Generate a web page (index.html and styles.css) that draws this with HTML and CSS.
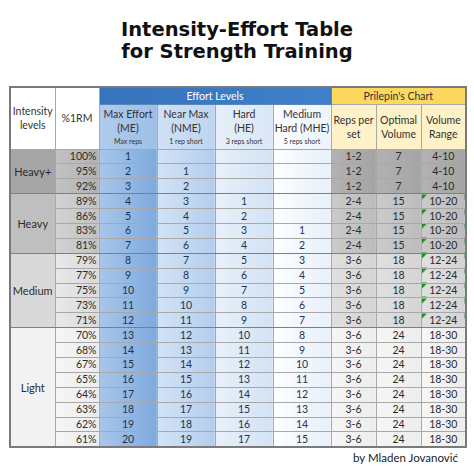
FILE: index.html
```html
<!DOCTYPE html>
<html lang="en">
<head>
    <meta charset="UTF-8">
    <title>Intensity-Effort Table</title>
    <link rel="stylesheet" href="styles.css">
</head>
<body>
    <h1 class="title">Intensity-Effort Table<br>for Strength Training</h1>

    <table class="chart">
        <colgroup>
            <col class="w-lvl"><col class="w-pct">
            <col class="w-eff"><col class="w-eff"><col class="w-eff"><col class="w-eff">
            <col class="w-pri"><col class="w-pri"><col class="w-pri">
        </colgroup>
        <thead>
            <tr class="head-top">
                <th rowspan="2" class="h-plain">Intensity<br>levels</th>
                <th rowspan="2" class="h-plain h-pct">%1RM</th>
                <th colspan="4" class="h-effort">Effort Levels</th>
                <th colspan="3" class="h-prilepin">Prilepin's Chart</th>
            </tr>
            <tr class="head-sub">
                <th class="h-me">Max Effort<br>(ME)<small>Max reps</small></th>
                <th class="h-nme">Near Max<br>(NME)<small>1 rep short</small></th>
                <th class="h-he">Hard<br>(HE)<small>3 reps short</small></th>
                <th class="h-mhe">Medium<br>Hard (MHE)<small>5 reps short</small></th>
                <th class="h-pri">Reps per<br>set</th>
                <th class="h-pri">Optimal<br>Volume</th>
                <th class="h-pri">Volume<br>Range</th>
            </tr>
        </thead>

        <tbody class="heavyplus">
            <tr><td rowspan="3" class="lvl">Heavy+</td><td class="pct">100%</td><td class="me">1</td><td class="nme"></td><td class="he"></td><td class="mhe"></td><td class="pri">1-2</td><td class="pri">7</td><td class="pri">4-10</td></tr>
            <tr><td class="pct">95%</td><td class="me">2</td><td class="nme">1</td><td class="he"></td><td class="mhe"></td><td class="pri">1-2</td><td class="pri">7</td><td class="pri">4-10</td></tr>
            <tr><td class="pct">92%</td><td class="me">3</td><td class="nme">2</td><td class="he"></td><td class="mhe"></td><td class="pri">1-2</td><td class="pri">7</td><td class="pri">4-10</td></tr>
        </tbody>

        <tbody class="heavy">
            <tr><td rowspan="4" class="lvl">Heavy</td><td class="pct">89%</td><td class="me">4</td><td class="nme">3</td><td class="he">1</td><td class="mhe"></td><td class="pri">2-4</td><td class="pri">15</td><td class="pri flag">10-20</td></tr>
            <tr><td class="pct">86%</td><td class="me">5</td><td class="nme">4</td><td class="he">2</td><td class="mhe"></td><td class="pri">2-4</td><td class="pri">15</td><td class="pri flag">10-20</td></tr>
            <tr><td class="pct">83%</td><td class="me">6</td><td class="nme">5</td><td class="he">3</td><td class="mhe">1</td><td class="pri">2-4</td><td class="pri">15</td><td class="pri flag">10-20</td></tr>
            <tr><td class="pct">81%</td><td class="me">7</td><td class="nme">6</td><td class="he">4</td><td class="mhe">2</td><td class="pri">2-4</td><td class="pri">15</td><td class="pri flag">10-20</td></tr>
        </tbody>

        <tbody class="medium">
            <tr><td rowspan="5" class="lvl">Medium</td><td class="pct">79%</td><td class="me">8</td><td class="nme">7</td><td class="he">5</td><td class="mhe">3</td><td class="pri">3-6</td><td class="pri">18</td><td class="pri flag">12-24</td></tr>
            <tr><td class="pct">77%</td><td class="me">9</td><td class="nme">8</td><td class="he">6</td><td class="mhe">4</td><td class="pri">3-6</td><td class="pri">18</td><td class="pri flag">12-24</td></tr>
            <tr><td class="pct">75%</td><td class="me">10</td><td class="nme">9</td><td class="he">7</td><td class="mhe">5</td><td class="pri">3-6</td><td class="pri">18</td><td class="pri flag">12-24</td></tr>
            <tr><td class="pct">73%</td><td class="me">11</td><td class="nme">10</td><td class="he">8</td><td class="mhe">6</td><td class="pri">3-6</td><td class="pri">18</td><td class="pri flag">12-24</td></tr>
            <tr><td class="pct">71%</td><td class="me">12</td><td class="nme">11</td><td class="he">9</td><td class="mhe">7</td><td class="pri">3-6</td><td class="pri">18</td><td class="pri flag">12-24</td></tr>
        </tbody>

        <tbody class="light">
            <tr><td rowspan="8" class="lvl">Light</td><td class="pct">70%</td><td class="me">13</td><td class="nme">12</td><td class="he">10</td><td class="mhe">8</td><td class="pri">3-6</td><td class="pri">24</td><td class="pri">18-30</td></tr>
            <tr><td class="pct">68%</td><td class="me">14</td><td class="nme">13</td><td class="he">11</td><td class="mhe">9</td><td class="pri">3-6</td><td class="pri">24</td><td class="pri">18-30</td></tr>
            <tr><td class="pct">67%</td><td class="me">15</td><td class="nme">14</td><td class="he">12</td><td class="mhe">10</td><td class="pri">3-6</td><td class="pri">24</td><td class="pri">18-30</td></tr>
            <tr><td class="pct">65%</td><td class="me">16</td><td class="nme">15</td><td class="he">13</td><td class="mhe">11</td><td class="pri">3-6</td><td class="pri">24</td><td class="pri">18-30</td></tr>
            <tr><td class="pct">64%</td><td class="me">17</td><td class="nme">16</td><td class="he">14</td><td class="mhe">12</td><td class="pri">3-6</td><td class="pri">24</td><td class="pri">18-30</td></tr>
            <tr><td class="pct">63%</td><td class="me">18</td><td class="nme">17</td><td class="he">15</td><td class="mhe">13</td><td class="pri">3-6</td><td class="pri">24</td><td class="pri">18-30</td></tr>
            <tr><td class="pct">62%</td><td class="me">19</td><td class="nme">18</td><td class="he">16</td><td class="mhe">14</td><td class="pri">3-6</td><td class="pri">24</td><td class="pri">18-30</td></tr>
            <tr><td class="pct">61%</td><td class="me">20</td><td class="nme">19</td><td class="he">17</td><td class="mhe">15</td><td class="pri">3-6</td><td class="pri">24</td><td class="pri">18-30</td></tr>
        </tbody>
    </table>

    <p class="credit">by Mladen Jovanović</p>
</body>
</html>
```

FILE: styles.css
```css
body {
    margin: 0;
    background: #fff;
    color: #222;
    font-family: Lato, "Liberation Sans", sans-serif;
}

.title {
    margin: 0;
    padding-top: 19px;
    font-family: "DejaVu Sans", sans-serif;
    font-size: 19.5px;
    line-height: 22px;
    font-weight: bold;
    text-align: center;
    color: #111;
}

.chart {
    margin: 23px 0 0 9px;
    width: 456px;
    table-layout: fixed;
    border-collapse: collapse;
    border: 2px solid #7a7a7a;
    font-size: 10.5px;
}
.w-lvl { width: 45px; }
.w-pct { width: 44px; }
.w-eff { width: 58px; }
.w-pri { width: 45px; }

.chart th,
.chart td {
    border: 1px solid #a8a8a8;
    padding: 0;
    text-align: center;
    vertical-align: middle;
}
.chart th {
    font-weight: normal;
    font-size: 10.5px;
    line-height: 14px;
    color: #333;
}

.head-top { height: 17px; }
.head-sub { height: 45px; }

.h-plain { background: #fff; }
.h-effort {
    background: linear-gradient(to right, #3674bc, #3f80c8);
    color: #fff !important;
    border-color: #5b86b8 !important;
}
.h-prilepin { background: #fdd85f; }
.h-me { background: linear-gradient(to right, #b0cbec, #9ebfe6); }
.h-nme { background: linear-gradient(to right, #cfe0f4, #bfd5f0); }
.h-he { background: linear-gradient(to right, #e6eff9, #dae7f6); }
.h-mhe { background: linear-gradient(to right, #fafcff, #eef4fb); }
.h-pri { background: #fff1c8; }
.chart th small {
    display: block;
    margin-top: 2px;
    font-size: 7px;
    line-height: 9px;
}

.chart tbody tr { height: 14.9px; }
.chart td { line-height: 13px; color: #2b2b2b; }

.lvl { font-size: 11px; }
.pct { text-align: right !important; padding-right: 2px !important; }
.me, .nme, .he, .mhe { color: #1f3350 !important; }
.me { background: linear-gradient(to right, #a8c6ea, #7eaadd); }
.nme { background: linear-gradient(to right, #d3e3f5, #b3ceee); }
.he { background: linear-gradient(to right, #e8f0fa, #d3e2f4); }
.mhe { background: linear-gradient(to right, #fdfeff, #e8f0fa); }

.heavyplus .lvl { background: #a6a6a6; }
.heavyplus .pct { background: linear-gradient(to right, #c2c2c2, #b2b2b2); }
.heavyplus .pri { background: linear-gradient(to right, #b2b2b2, #a4a4a4); }

.heavy .lvl { background: #bfbfbf; }
.heavy .pct { background: linear-gradient(to right, #d2d2d2, #c2c2c2); }
.heavy .pri { background: linear-gradient(to right, #cacaca, #bcbcbc); }

.medium .lvl { background: #d9d9d9; }
.medium .pct { background: linear-gradient(to right, #e8e8e8, #dadada); }
.medium .pri { background: linear-gradient(to right, #e0e0e0, #d4d4d4); }

.light .lvl { background: #f2f2f2; }
.light .pct { background: linear-gradient(to right, #f6f6f6, #ececec); }
.light .pri { background: linear-gradient(to right, #f6f6f6, #ededed); }

/* darker line closing each intensity group */
.chart tbody tr:last-child td,
.chart .lvl { border-bottom-color: #7f7f7f; }

/* green comment marker in the corner */
.heavy .flag {
    background: linear-gradient(135deg, #1f8a2a 4px, transparent 4px),
                linear-gradient(to right, #cacaca, #bcbcbc);
}
.medium .flag {
    background: linear-gradient(135deg, #1f8a2a 4px, transparent 4px),
                linear-gradient(to right, #e0e0e0, #d4d4d4);
}

.credit {
    margin: 3px 16px 0 0;
    text-align: right;
    font-size: 11.5px;
    color: #222;
}
```
